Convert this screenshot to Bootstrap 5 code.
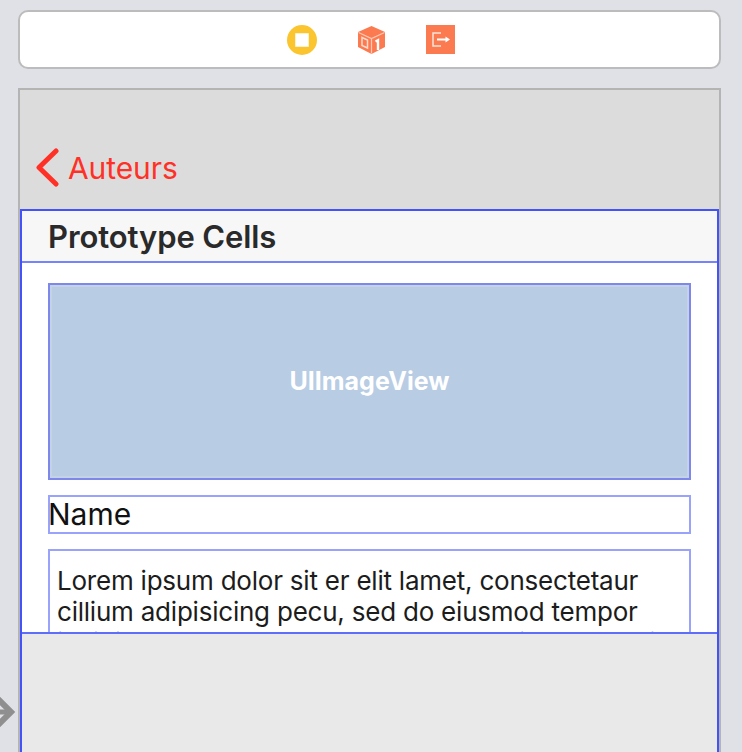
<!DOCTYPE html>
<html lang="en">

    <head>
        <meta charset="UTF-8">
        <meta name="viewport" content="width=device-width, initial-scale=1.0">
        <title>Storyboard</title>
        <link href="https://cdn.jsdelivr.net/npm/bootstrap@5.3.2/dist/css/bootstrap.min.css" rel="stylesheet">
        <script src="https://cdn.jsdelivr.net/npm/bootstrap@5.3.2/dist/js/bootstrap.bundle.min.js"></script>
        <style>
            html, body {
                height: 752px;
                overflow: hidden;
            }

            body {
                background-color: #e0e1e6;
                font-family: 'Inter', 'Liberation Sans', sans-serif;
                padding: 10px 21px 0 18px;
                position: relative;
            }

            .scene-dock {
                height: 59px;
                background-color: #fff;
                border: 2px solid #bcbcbc;
                border-radius: 10px;
                gap: 41px;
                padding-left: 3px;
            }

            .scene-frame {
                margin-top: 19px;
                height: 664px;
                border: 2px solid #b4b4b4;
                border-bottom: 0;
            }

            .nav-zone {
                height: 119px;
                background-color: #dcdcdc;
                padding: 0 0 22px 15px;
            }

            .back-label {
                color: #ff3126;
                font-size: 30px;
                line-height: 37px;
                margin-left: 8px;
                letter-spacing: -0.1px;
            }

            .table-zone {
                height: 545px;
                border: 2px solid #4353fb;
                border-bottom: 0;
                background-color: #e9e9ea;
            }

            .section-head {
                height: 52px;
                background-color: #f7f7f7;
                border-bottom: 2px solid #7683fb;
                color: #2a2a2a;
                font-size: 31px;
                font-weight: 600;
                line-height: 52px;
                padding-left: 26px;
                letter-spacing: -0.1px;
            }

            .proto-cell {
                height: 371px;
                background-color: #fff;
                border-bottom: 2px solid #5f6efa;
                padding: 20px 26px 0 26px;
                overflow: hidden;
            }

            .image-box {
                height: 197px;
                background-color: #b8cce4;
                border: 2px solid #7e88ea;
                box-shadow: inset 0 0 0 2px #c3d2e6;
                color: #fff;
                font-size: 25px;
                font-weight: 700;
            }

            .name-box {
                height: 39px;
                margin-top: 15px;
                border: 2px solid #99a3fb;
                color: #111;
                font-size: 30px;
                line-height: 35px;
                text-indent: -2px;
            }

            .text-box {
                height: 200px;
                margin-top: 15px;
                border: 2px solid #99a3fb;
                border-bottom: 0;
                padding: 14px 6px 0 7px;
                color: #1c1c1c;
                font-size: 26px;
                line-height: 31px;
                letter-spacing: -0.22px;
            }

            .entry-arrow {
                position: absolute;
                left: 0;
                top: 697px;
            }
        </style>
    </head>

    <body>
        <!-- scene dock -->
        <div class="scene-dock d-flex align-items-center justify-content-center">
            <svg width="30" height="30" viewBox="0 0 30 30">
                <circle cx="15" cy="15" r="15" fill="#fbc52f"/>
                <rect x="8.5" y="8.5" width="13" height="13" fill="#fff" stroke="#fff" stroke-dasharray="1 1"/>
            </svg>
            <svg width="27" height="28" viewBox="0 0 27 28">
                <path d="M13.5 0 L27 6 L27 21 L13.5 28 L0 21 L0 6 Z" fill="#fb7a50"/>
                <path d="M0.5 6.5 L13.5 12.5 L26.5 6.5 M13.5 12.5 V27.5" fill="none" stroke="#ffc9b5" stroke-width="1.2"/>
                <path d="M4 11.5 L9.5 14 L9.5 22 L4 19.5 Z" fill="none" stroke="#ffd9cc" stroke-width="1.5"/>
                <path d="M17.5 15.5 L20 14.2 L20 24" fill="none" stroke="#fff" stroke-width="2.4"/>
            </svg>
            <svg width="29" height="29" viewBox="0 0 29 29">
                <rect width="29" height="29" fill="#fb7a50"/>
                <path d="M15 8 H7 V21 H15" fill="none" stroke="#ffe3d9" stroke-width="1.5"/>
                <path d="M11 14.5 H20" stroke="#fff" stroke-width="2"/>
                <path d="M19.5 11.5 L24 14.5 L19.5 17.5 Z" fill="#fff"/>
            </svg>
        </div>

        <div class="scene-frame">
            <!-- navigation bar -->
            <div class="nav-zone d-flex align-items-end">
                <svg width="25" height="39" viewBox="0 0 25 39">
                    <path d="M21 3 L4 19.5 L21 36" fill="none" stroke="#ff3126" stroke-width="5" stroke-linecap="round" stroke-linejoin="round"/>
                </svg>
                <span class="back-label">Auteurs</span>
            </div>

            <!-- table view -->
            <div class="table-zone">
                <div class="section-head">Prototype Cells</div>
                <div class="proto-cell">
                    <div class="image-box d-flex align-items-center justify-content-center">UIImageView</div>
                    <div class="name-box">Name</div>
                    <div class="text-box">Lorem ipsum dolor sit er elit lamet, consectetaur cillium adipisicing pecu, sed do eiusmod tempor incididunt ut labore et dolore magna aliqua. Ut enim ad</div>
                </div>
            </div>
        </div>

        <!-- initial view controller arrow -->
        <svg class="entry-arrow" width="16" height="30" viewBox="0 0 16 30">
            <path d="M0 15 H10" stroke="#8f8f8f" stroke-width="5"/>
            <path d="M-3 1 L11 15 L-3 29" fill="none" stroke="#8f8f8f" stroke-width="6"/>
        </svg>
    </body>

</html>
